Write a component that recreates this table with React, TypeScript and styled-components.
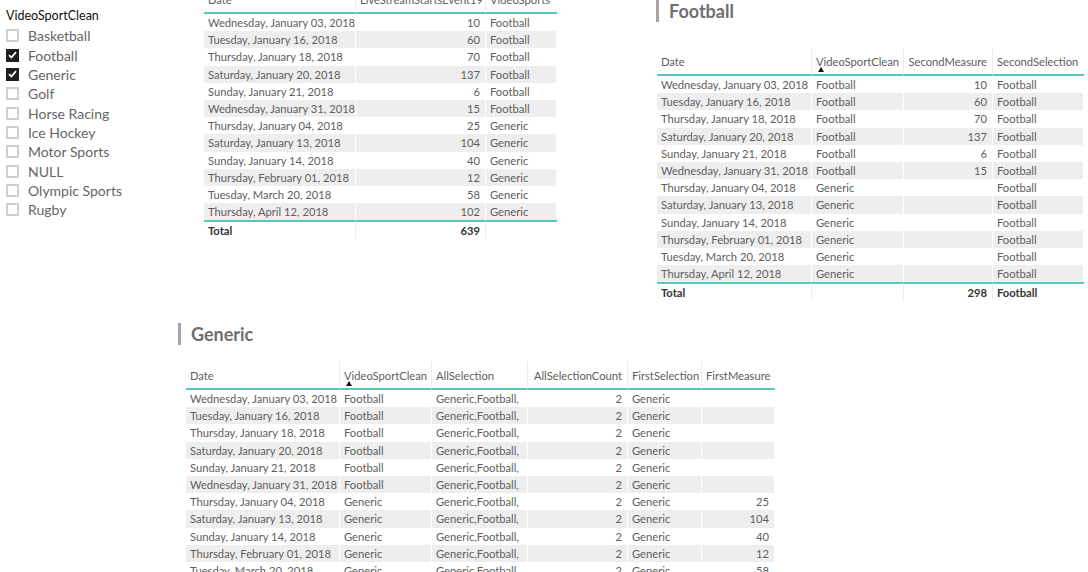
import React from "react";
import styled, { createGlobalStyle } from "styled-components";

const FONT = `"Lato", "Segoe UI", "Open Sans", sans-serif`;

const Global = createGlobalStyle`
  html, body { margin: 0; padding: 0; background: #ffffff; }
  body { font-family: ${FONT}; }
  * { box-sizing: border-box; }
`;

const Canvas = styled.div`
  position: relative;
  width: 1088px;
  height: 572px;
  overflow: hidden;
  background: #ffffff;
`;

const Visual = styled.div<{ $x: number; $y: number; $w: number }>`
  position: absolute;
  left: ${(p) => p.$x}px;
  top: ${(p) => p.$y}px;
  width: ${(p) => p.$w}px;
  display: flex;
  flex-direction: column;
`;

/* Slicer */
const SlicerTitle = styled.div`
  font-size: 12.5px;
  color: #111;
  line-height: 16px;
  height: 18px;
`;
const SlicerList = styled.div`
  display: flex;
  flex-direction: column;
`;
const SlicerItem = styled.div`
  display: flex;
  align-items: center;
  gap: 9px;
  height: 19.35px;
  font-size: 14px;
  color: #666;
`;
const Box = styled.span<{ $on: boolean }>`
  width: 13px;
  height: 13px;
  flex: 0 0 13px;
  border: 2px solid ${(p) => (p.$on ? "#1e1e1e" : "#cfcfcf")};
  background: ${(p) => (p.$on ? "#1e1e1e" : "#fff")};
  display: flex;
  align-items: center;
  justify-content: center;
`;

/* Title */
const TitleRow = styled.div`
  display: flex;
  align-items: center;
  gap: 10px;
  height: 22px;
`;
const TitleBar = styled.span`
  width: 3px;
  height: 22px;
  background: #a6a6a6;
`;
const TitleText = styled.span`
  font-size: 18px;
  font-weight: 700;
  color: #6e6e6e;
  line-height: 22px;
`;

/* Table */
const Grid = styled.div<{ $cols: string; $mt: number; $ml: number }>`
  display: grid;
  grid-template-columns: ${(p) => p.$cols};
  margin-top: ${(p) => p.$mt}px;
  margin-left: ${(p) => p.$ml}px;
  font-size: 11.2px;
  color: #5e5e5e;
`;
const Head = styled.div<{ $right?: boolean; $last?: boolean }>`
  height: 28px;
  padding: 7px 5px 0 4px;
  line-height: 14px;
  white-space: nowrap;
  overflow: hidden;
  text-align: ${(p) => (p.$right ? "right" : "left")};
  color: #5e5e5e;
  border-bottom: 2px solid #59c6bd;
  border-right: ${(p) => (p.$last ? "none" : "1px solid #ececec")};
  position: relative;
`;
const SortArrow = styled.span`
  position: absolute;
  left: 6px;
  bottom: 2px;
  width: 0;
  height: 0;
  border-left: 3.5px solid transparent;
  border-right: 3.5px solid transparent;
  border-bottom: 5px solid #111;
`;
const Cell = styled.div<{ $right?: boolean; $alt: boolean }>`
  height: 17.2px;
  line-height: 17.2px;
  padding: 0 5px 0 4px;
  white-space: nowrap;
  overflow: hidden;
  text-align: ${(p) => (p.$right ? "right" : "left")};
  background: ${(p) => (p.$alt ? "#eeeeee" : "#ffffff")};
  border-right: 1px solid #fff;
`;
const TotalCell = styled.div<{ $right?: boolean; $last?: boolean }>`
  height: 18px;
  line-height: 17px;
  padding: 0 5px 0 4px;
  white-space: nowrap;
  font-weight: 700;
  color: #333;
  text-align: ${(p) => (p.$right ? "right" : "left")};
  border-top: 2px solid #59c6bd;
  border-right: ${(p) => (p.$last ? "none" : "1px solid #ececec")};
`;

type Col = { name: string; right?: boolean; sort?: boolean };

const dates = [
  "Wednesday, January 03, 2018",
  "Tuesday, January 16, 2018",
  "Thursday, January 18, 2018",
  "Saturday, January 20, 2018",
  "Sunday, January 21, 2018",
  "Wednesday, January 31, 2018",
  "Thursday, January 04, 2018",
  "Saturday, January 13, 2018",
  "Sunday, January 14, 2018",
  "Thursday, February 01, 2018",
  "Tuesday, March 20, 2018",
  "Thursday, April 12, 2018",
];
const values = [10, 60, 70, 137, 6, 15, 25, 104, 40, 12, 58, 102];
const sport = (i: number) => (i < 6 ? "Football" : "Generic");

function Table({
  cols,
  widths,
  rows,
  total,
  mt,
  ml,
}: {
  cols: Col[];
  widths: number[];
  rows: (string | number)[][];
  total?: (string | number)[];
  mt: number;
  ml: number;
}) {
  return (
    <Grid $cols={widths.map((w) => `${w}px`).join(" ")} $mt={mt} $ml={ml}>
      {cols.map((c, i) => (
        <Head key={c.name} $right={c.right} $last={i === cols.length - 1}>
          {c.name}
          {c.sort && <SortArrow />}
        </Head>
      ))}
      {rows.map((r, ri) =>
        r.map((v, ci) => (
          <Cell key={`${ri}-${ci}`} $right={cols[ci].right} $alt={ri % 2 === 1}>
            {v}
          </Cell>
        ))
      )}
      {total &&
        total.map((v, ci) => (
          <TotalCell key={`t${ci}`} $right={cols[ci].right} $last={ci === total.length - 1}>
            {v}
          </TotalCell>
        ))}
    </Grid>
  );
}

const Check = () => (
  <svg width="9" height="8" viewBox="0 0 9 8">
    <path d="M1 4.2 L3.4 6.5 L8 1.2" stroke="#fff" strokeWidth="1.8" fill="none" />
  </svg>
);

const sports = [
  "Basketball",
  "Football",
  "Generic",
  "Golf",
  "Horse Racing",
  "Ice Hockey",
  "Motor Sports",
  "NULL",
  "Olympic Sports",
  "Rugby",
];
const checked = new Set(["Football", "Generic"]);

export default function App() {
  return (
    <>
      <Global />
      <Canvas>
        <Visual $x={6} $y={8} $w={170}>
          <SlicerTitle>VideoSportClean</SlicerTitle>
          <SlicerList>
            {sports.map((s) => (
              <SlicerItem key={s}>
                <Box $on={checked.has(s)}>{checked.has(s) && <Check />}</Box>
                {s}
              </SlicerItem>
            ))}
          </SlicerList>
        </Visual>

        <Visual $x={204} $y={-14} $w={353}>
          <Table
            mt={0}
            ml={0}
            widths={[152, 130, 71]}
            cols={[{ name: "Date" }, { name: "LiveStreamStartsEvent19", right: true }, { name: "VideoSports" }]}
            rows={dates.map((d, i) => [d, values[i], sport(i)])}
            total={["Total", 639, ""]}
          />
        </Visual>

        <Visual $x={656} $y={0} $w={430}>
          <TitleRow>
            <TitleBar />
            <TitleText>Football</TitleText>
          </TitleRow>
          <Table
            mt={26}
            ml={1}
            widths={[155, 92, 89, 91]}
            cols={[
              { name: "Date" },
              { name: "VideoSportClean", sort: true },
              { name: "SecondMeasure", right: true },
              { name: "SecondSelection" },
            ]}
            rows={dates.map((d, i) => [d, sport(i), i < 6 ? values[i] : "", "Football"])}
            total={["Total", "", 298, "Football"]}
          />
        </Visual>

        <Visual $x={178} $y={323} $w={600}>
          <TitleRow>
            <TitleBar />
            <TitleText>Generic</TitleText>
          </TitleRow>
          <Table
            mt={17}
            ml={8}
            widths={[154, 92, 96, 100, 74, 73]}
            cols={[
              { name: "Date" },
              { name: "VideoSportClean", sort: true },
              { name: "AllSelection" },
              { name: "AllSelectionCount", right: true },
              { name: "FirstSelection" },
              { name: "FirstMeasure", right: true },
            ]}
            rows={dates.map((d, i) => [d, sport(i), "Generic,Football,", 2, "Generic", i < 6 ? "" : values[i]])}
          />
        </Visual>
      </Canvas>
    </>
  );
}
